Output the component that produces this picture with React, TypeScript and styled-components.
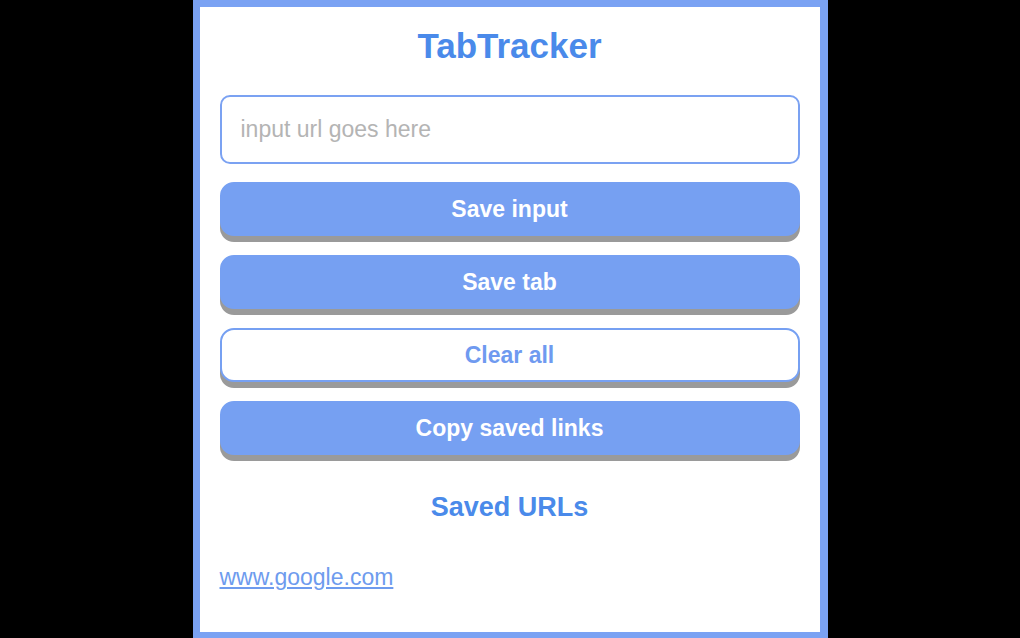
import * as React from 'react';
import styled, {createGlobalStyle} from 'styled-components';

const GlobalStyle = createGlobalStyle`
  html, body {
    margin: 0;
    padding: 0;
    background: #000;
    font-family: "Liberation Sans", Arial, sans-serif;
  }
`;

const Popup = styled.main`
  box-sizing: border-box;
  width: 635px;
  height: 638px;
  margin: 0 auto;
  border: 7px solid #7aa2f3;
  border-right-width: 8px;
  border-bottom-width: 6px;
  background: #fff;
  padding: 19px 20px 0;
  display: flex;
  flex-direction: column;
`;

const Title = styled.h1`
  margin: 0;
  text-align: center;
  font-size: 35px;
  line-height: 40px;
  font-weight: bold;
  color: #4a8aea;
`;

const UrlInput = styled.input`
  box-sizing: border-box;
  margin-top: 29px;
  width: 100%;
  height: 69px;
  border: 2px solid #7ba2f2;
  border-radius: 10px;
  padding: 0 19px;
  font-family: inherit;
  font-size: 23px;
  color: #333;
  outline: none;

  &::placeholder {
    color: #b4b4b4;
  }
`;

const Actions = styled.div`
  display: flex;
  flex-direction: column;
  gap: 19px;
  margin-top: 18px;
`;

const Button = styled.button<{ $outline?: boolean }>`
  box-sizing: border-box;
  width: 100%;
  height: 54px;
  border-radius: 14px;
  border: 2px solid #76a0f2;
  background: ${p => (p.$outline ? '#fff' : '#76a0f2')};
  color: ${p => (p.$outline ? '#6f9af0' : '#fff')};
  box-shadow: 0 6px 0 #9a9a9a;
  font-family: inherit;
  font-size: 23px;
  font-weight: bold;
  cursor: pointer;
`;

const SectionTitle = styled.h2`
  margin: 36px 0 0;
  text-align: center;
  font-size: 27px;
  line-height: 32px;
  font-weight: bold;
  color: #4a8aea;
`;

const LinkList = styled.ul`
  list-style: none;
  margin: 41px 0 0;
  padding: 0;
`;

const SavedLink = styled.a`
  font-size: 23px;
  line-height: 26px;
  color: #6e9bee;
  text-decoration: underline;
`;

const savedUrls = ['www.google.com'];

export default function App(): JSX.Element {
  return (
    <>
      <GlobalStyle />
      <Popup>
        <Title>TabTracker</Title>
        <UrlInput placeholder="input url goes here" />
        <Actions>
          <Button>Save input</Button>
          <Button>Save tab</Button>
          <Button $outline>Clear all</Button>
          <Button>Copy saved links</Button>
        </Actions>
        <SectionTitle>Saved URLs</SectionTitle>
        <LinkList>
          {savedUrls.map(url => (
            <li key={url}>
              <SavedLink href="#">{url}</SavedLink>
            </li>
          ))}
        </LinkList>
      </Popup>
    </>
  );
}
